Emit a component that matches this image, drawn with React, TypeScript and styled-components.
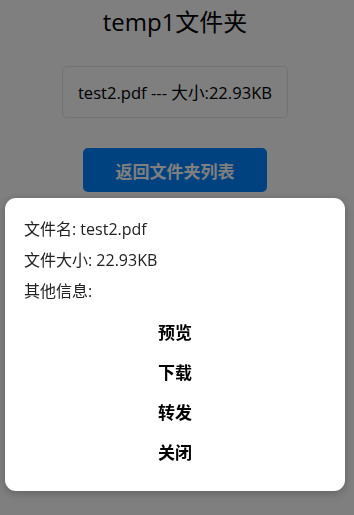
import React from "react";
import styled, { createGlobalStyle } from "styled-components";

const GlobalStyle = createGlobalStyle`
  html, body {
    margin: 0;
    padding: 0;
    background: #ffffff;
    font-family: "Open Sans", "Noto Sans CJK SC", sans-serif;
    color: #000000;
  }
  * {
    box-sizing: border-box;
  }
`;

const Page = styled.main`
  display: flex;
  flex-direction: column;
  align-items: center;
  padding: 4px 4px 0 0;
  min-height: 515px;
`;

const Title = styled.h1`
  margin: 0;
  font-size: 24px;
  font-weight: 400;
  line-height: 36px;
`;

const FileItem = styled.div`
  margin-top: 26px;
  padding: 0 15px;
  height: 52px;
  display: flex;
  align-items: center;
  border: 1px solid #e4e4e4;
  border-radius: 5px;
  font-size: 16.6px;
`;

const BackButton = styled.button`
  margin-top: 30px;
  width: 184px;
  height: 44px;
  border: none;
  border-radius: 5px;
  background: #0084ff;
  color: #ffffff;
  font-family: "Noto Sans CJK SC", sans-serif;
  font-size: 17px;
  font-weight: 700;
`;

const Overlay = styled.div`
  position: fixed;
  inset: 0;
  background: rgba(0, 0, 0, 0.5);
`;

const Sheet = styled.div`
  position: fixed;
  left: 5px;
  right: 9px;
  top: 198px;
  height: 293px;
  background: #ffffff;
  border-radius: 11px;
  padding: 16px 19px 0;
  box-shadow: 0 2px 10px rgba(0, 0, 0, 0.25);
`;

const InfoLine = styled.p`
  margin: 0;
  font-size: 16px;
  line-height: 31px;
  color: #222222;
`;

const Actions = styled.div`
  display: flex;
  flex-direction: column;
  align-items: center;
  margin-top: 4px;
`;

const ActionButton = styled.button`
  background: none;
  border: none;
  padding: 0;
  height: 40px;
  font-family: "Noto Sans CJK SC", sans-serif;
  font-size: 17px;
  font-weight: 700;
  color: #000000;
`;

export default function App() {
  return (
    <>
      <GlobalStyle />
      <Page>
        <Title>temp1文件夹</Title>
        <FileItem>test2.pdf --- 大小:22.93KB</FileItem>
        <BackButton>返回文件夹列表</BackButton>
      </Page>
      <Overlay />
      <Sheet>
        <InfoLine>文件名: test2.pdf</InfoLine>
        <InfoLine>文件大小: 22.93KB</InfoLine>
        <InfoLine>其他信息:</InfoLine>
        <Actions>
          {["预览", "下载", "转发", "关闭"].map((label) => (
            <ActionButton key={label}>{label}</ActionButton>
          ))}
        </Actions>
      </Sheet>
    </>
  );
}
